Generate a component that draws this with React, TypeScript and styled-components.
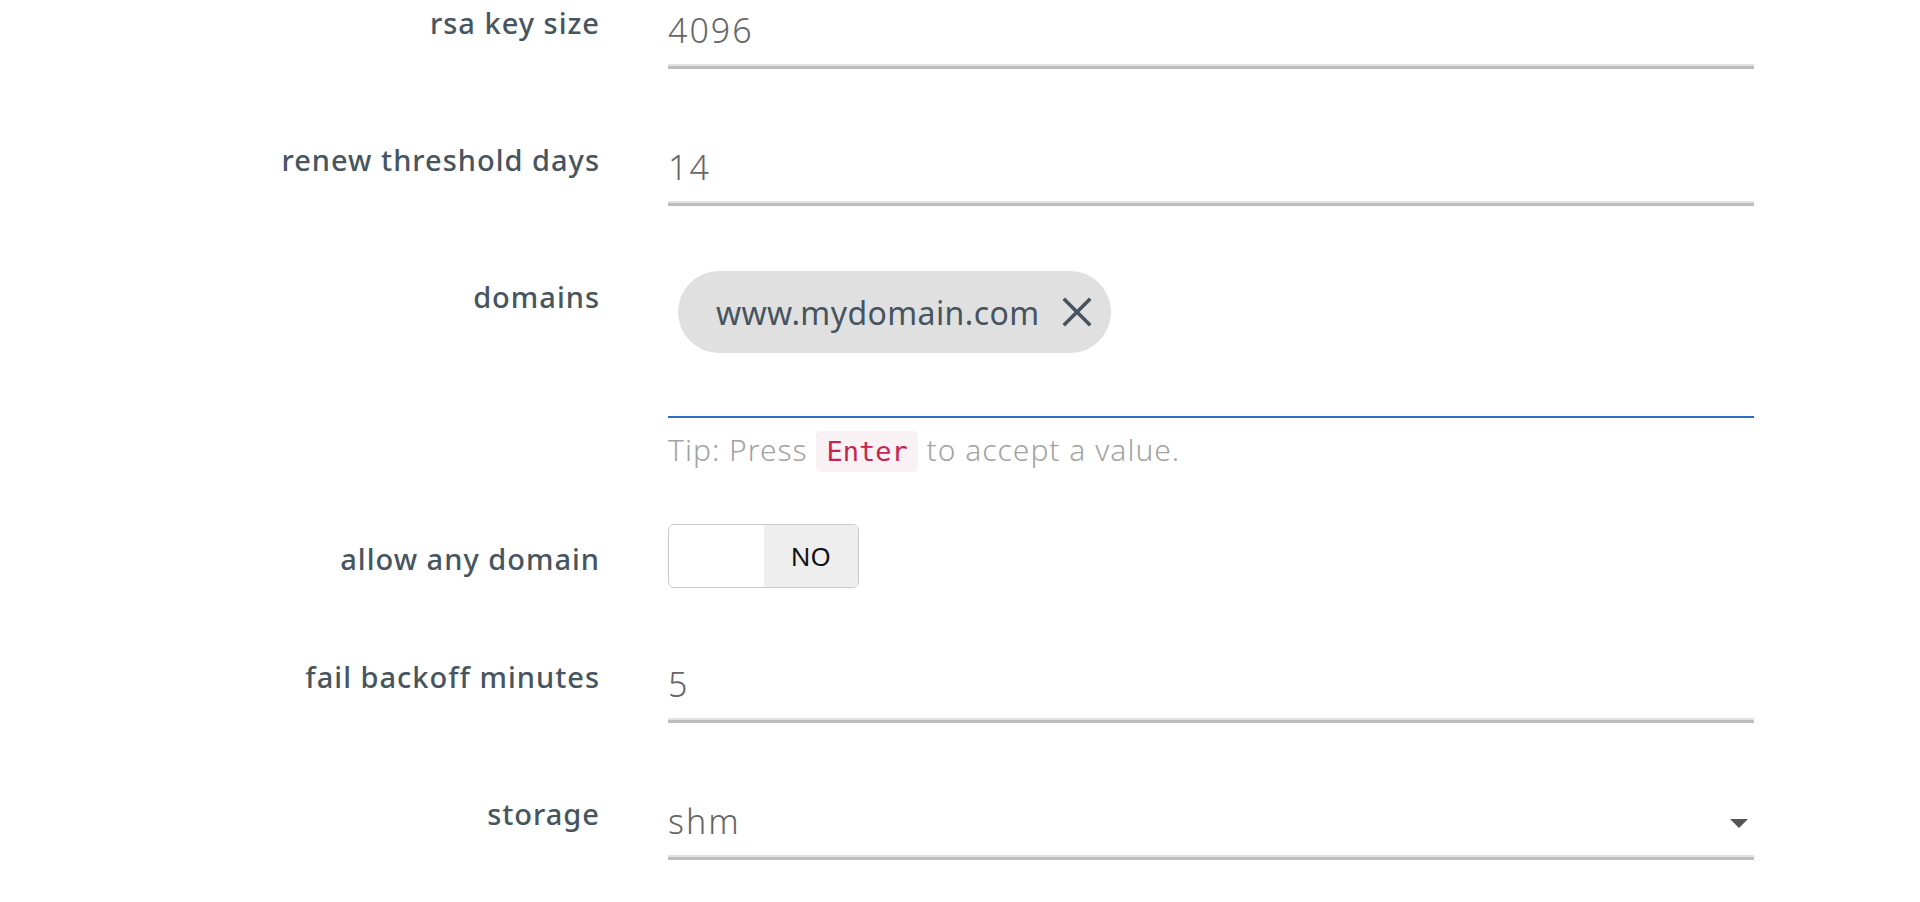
import React from "react";
import styled, { createGlobalStyle } from "styled-components";

const GlobalStyle = createGlobalStyle`
  html, body {
    margin: 0;
    padding: 0;
    background: #ffffff;
  }
  body {
    font-family: "Noto Sans", "Open Sans", sans-serif;
  }
`;

const Form = styled.div`
  display: flex;
  flex-direction: column;
  width: 1920px;
`;

const Row = styled.div<{ $gap: number }>`
  display: grid;
  grid-template-columns: 600px 1086px;
  column-gap: 68px;
  margin-bottom: ${(p) => p.$gap}px;
`;

const Label = styled.div<{ $pad?: number }>`
  text-align: right;
  font-size: 29px;
  line-height: 36px;
  font-weight: 500;
  letter-spacing: 1px;
  color: #47555f;
  padding-top: ${(p) => p.$pad ?? 5}px;
  white-space: nowrap;
`;

const TextField = styled.div`
  position: relative;
  font-size: 34px;
  line-height: 48px;
  font-weight: 300;
  letter-spacing: 2px;
  color: #666666;
  padding: 6px 0 15px 0;
  box-shadow: inset 0 -3px 0 #bdbdbd, inset 0 -5px 0 #e2e2e2;
`;

const Caret = styled.span`
  position: absolute;
  right: 6px;
  top: 28px;
  width: 0;
  height: 0;
  border-left: 9px solid transparent;
  border-right: 9px solid transparent;
  border-top: 9px solid #555555;
`;

const ChipField = styled.div`
  display: flex;
  flex-direction: column;
  margin-top: -1px;
`;

const ChipList = styled.div`
  display: flex;
  padding-left: 10px;
`;

const Chip = styled.div`
  display: inline-flex;
  align-items: center;
  gap: 22px;
  height: 82px;
  padding: 0 19px 0 38px;
  border-radius: 41px;
  background: #e0e0e0;
  font-size: 32px;
  letter-spacing: 0.4px;
  color: #46545f;
`;

const ChipInput = styled.div`
  height: 63px;
  border-bottom: 2px solid #2f6cc4;
`;

const Tip = styled.div`
  margin-top: 11px;
  font-size: 30px;
  line-height: 41px;
  font-weight: 300;
  letter-spacing: 1px;
  color: #a3a3a3;
`;

const Code = styled.code`
  display: inline-block;
  font-family: "DejaVu Sans Mono", "Liberation Mono", monospace;
  font-size: 27px;
  line-height: 41px;
  letter-spacing: 0;
  padding: 0 10px;
  border-radius: 5px;
  background: #f9f2f4;
  color: #c7254e;
`;

const Toggle = styled.div`
  display: flex;
  width: 191px;
  height: 64px;
  margin-top: 4px;
  box-sizing: border-box;
  border: 1.5px solid #c9c9c9;
  border-radius: 6px;
  overflow: hidden;
`;

const ToggleHalf = styled.div<{ $off?: boolean }>`
  flex: 1;
  display: flex;
  align-items: center;
  justify-content: center;
  background: ${(p) => (p.$off ? "#eeeeee" : "#ffffff")};
  font-size: 26px;
  color: #111111;
`;

const CloseIcon = () => (
  <svg width="30" height="30" viewBox="0 0 30 30">
    <path
      d="M3 3 L27 27 M27 3 L3 27"
      stroke="#46545f"
      strokeWidth="3.6"
      strokeLinecap="square"
    />
  </svg>
);

export default function App() {
  return (
    <>
      <GlobalStyle />
      <Form>
        <Row $gap={68}>
          <Label>rsa key size</Label>
          <TextField>4096</TextField>
        </Row>
        <Row $gap={66}>
          <Label>renew threshold days</Label>
          <TextField>14</TextField>
        </Row>
        <Row $gap={48}>
          <Label $pad={7}>domains</Label>
          <div>
            <ChipField>
              <ChipList>
                <Chip>
                  www.mydomain.com
                  <CloseIcon />
                </Chip>
              </ChipList>
              <ChipInput />
            </ChipField>
            <Tip>
              Tip: Press <Code>Enter</Code> to accept a value.
            </Tip>
          </div>
        </Row>
        <Row $gap={66}>
          <Label $pad={21}>allow any domain</Label>
          <Toggle>
            <ToggleHalf />
            <ToggleHalf $off>NO</ToggleHalf>
          </Toggle>
        </Row>
        <Row $gap={68}>
          <Label>fail backoff minutes</Label>
          <TextField>5</TextField>
        </Row>
        <Row $gap={0}>
          <Label>storage</Label>
          <TextField>
            shm
            <Caret />
          </TextField>
        </Row>
      </Form>
    </>
  );
}
